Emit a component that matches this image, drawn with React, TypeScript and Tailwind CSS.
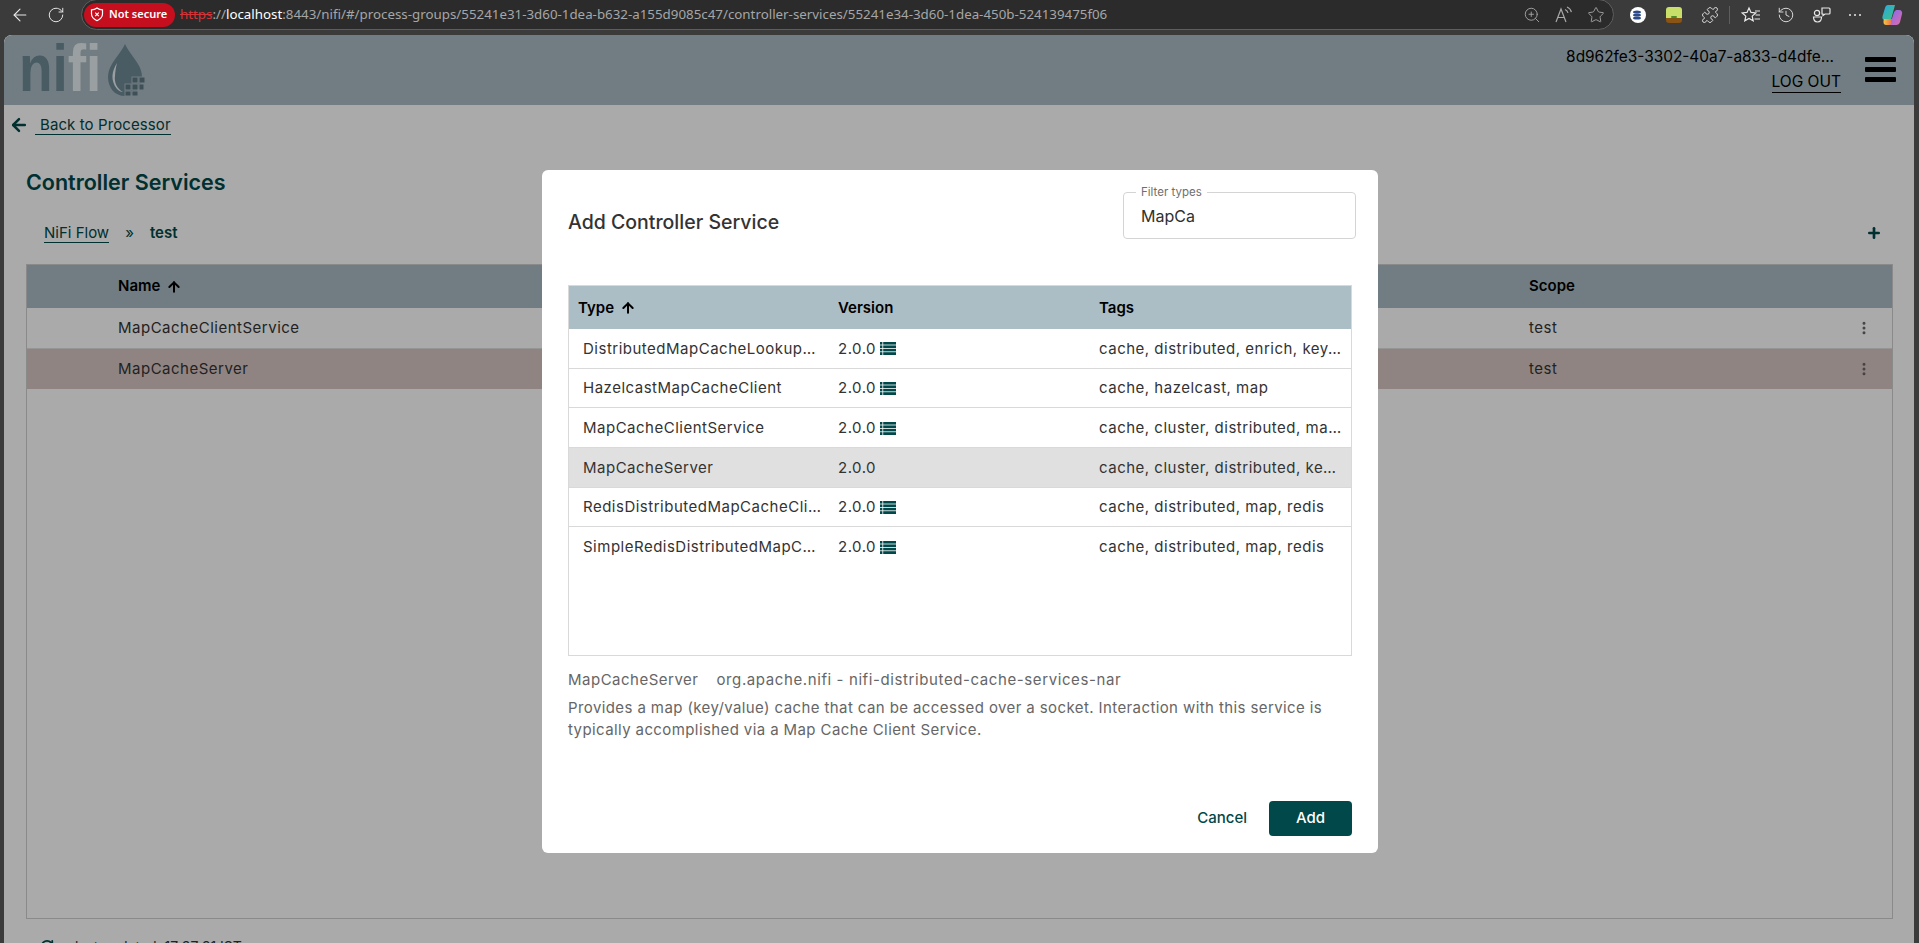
import { ArrowLeft, ArrowUp, EllipsisVertical, History, Plus, Puzzle, RotateCw, Star, ZoomIn } from "lucide-react";

interface TypeRow {
  type: string;
  tags: string;
  restricted: boolean;
  selected?: boolean;
}

const typeRows: TypeRow[] = [
  { type: "DistributedMapCacheLookupService", tags: "cache, distributed, enrich, key, lookup, map, value", restricted: true },
  { type: "HazelcastMapCacheClient", tags: "cache, hazelcast, map", restricted: true },
  { type: "MapCacheClientService", tags: "cache, cluster, distributed, map, state", restricted: true },
  { type: "MapCacheServer", tags: "cache, cluster, distributed, key/value, map, server", restricted: false, selected: true },
  { type: "RedisDistributedMapCacheClientService", tags: "cache, distributed, map, redis", restricted: true },
  { type: "SimpleRedisDistributedMapCacheClientService", tags: "cache, distributed, map, redis", restricted: true },
];

const ListIcon = () => (
  <svg width="16" height="13" viewBox="0 0 16 13" className="shrink-0" fill="#004849">
    <rect x="0" y="0" width="2.4" height="2.6" />
    <rect x="3.2" y="0" width="12.8" height="2.6" />
    <rect x="0" y="3.4" width="2.4" height="2.6" />
    <rect x="3.2" y="3.4" width="12.8" height="2.6" />
    <rect x="0" y="6.8" width="2.4" height="2.6" />
    <rect x="3.2" y="6.8" width="12.8" height="2.6" />
    <rect x="0" y="10.2" width="2.4" height="2.8" />
    <rect x="3.2" y="10.2" width="12.8" height="2.8" />
  </svg>
);

const BrowserBar = () => (
  <div className="h-[35px] shrink-0 flex items-start bg-[#3b3b3b] text-[#e8e8e8]">
    <div className="w-[40px] h-[30px] flex items-center justify-center">
      <ArrowLeft size={20} strokeWidth={1.3} />
    </div>
    <div className="w-[32px] h-[30px] flex items-center justify-center">
      <RotateCw size={18} strokeWidth={1.3} />
    </div>
    <div className="ml-[9px] -mt-px w-[1533px] h-[31px] rounded-full border border-[#5e5e5e] bg-[#2b2b2b] flex items-center pl-[2px] pr-[8px] overflow-hidden">
      <div className="h-[24px] w-[91px] rounded-full bg-[#c50f1f] flex items-center pl-[6px] gap-[5px] text-white text-[11px] font-semibold font-['Noto_Sans',sans-serif] shrink-0">
        <svg width="14" height="15" viewBox="0 0 14 15" fill="none" stroke="white" strokeWidth="1.2">
          <path d="M7 1c1.6 1.2 3.4 1.8 5.5 1.9v4.2c0 3-2.2 5.2-5.5 6.6-3.3-1.4-5.5-3.6-5.5-6.6V2.9C3.6 2.8 5.4 2.2 7 1z" />
          <path d="M5.2 5.6l3.6 3.6M8.8 5.6L5.2 9.2" />
        </svg>
        <span>Not secure</span>
      </div>
      <div className="ml-[5px] text-[13.33px] whitespace-nowrap text-[#a6a6a6] font-['Noto_Sans',sans-serif]">
        <span className="text-[#d13438] line-through">https</span>
        <span>://</span>
        <span className="text-white">localhost</span>
        <span>:8443/nifi/#/process-groups/55241e31-3d60-1dea-b632-a155d9085c47/controller-services/55241e34-3d60-1dea-450b-524139475f06</span>
      </div>
      <div className="ml-auto flex items-center gap-[13px] text-[#a8a8a8]">
        <ZoomIn size={18} strokeWidth={1.2} />
        <svg width="20" height="18" viewBox="0 0 20 18" fill="none" stroke="currentColor" strokeWidth="1.2">
          <path d="M2 16L7 3l5 13M3.8 11.5h6.4" />
          <path d="M11 3.5c1.6.6 2.6 1.8 3 3.4M13 1c2.4.9 3.9 2.8 4.4 5.2" />
        </svg>
        <Star size={18} strokeWidth={1.2} />
      </div>
    </div>
    <div className="ml-[16px] h-[30px] flex items-center">
      <div className="w-[16px] h-[16px] rounded-full bg-white flex items-center justify-center shrink-0">
        <svg width="12" height="12" viewBox="0 0 12 12" fill="#2d4a8a">
          <ellipse cx="5" cy="3" rx="4" ry="1.6" />
          <ellipse cx="5" cy="6" rx="4" ry="1.6" />
          <ellipse cx="5" cy="9" rx="4" ry="1.6" />
        </svg>
      </div>
      <div className="ml-[20px] w-[16px] h-[16px] rounded-[3px] overflow-hidden flex flex-col shrink-0">
        <div className="h-[11px] bg-[#c8e06a] flex items-end justify-center">
          <span className="w-[6px] h-[2px] bg-[#4d8a2a] rounded-full" />
        </div>
        <div className="h-[5px] bg-[#8a5414]" />
      </div>
      <Puzzle size={18} strokeWidth={1.2} className="ml-[19px]" />
      <div className="ml-[10px] w-px h-[18px] bg-[#5e5e5e]" />
      <svg width="20" height="18" viewBox="0 0 20 18" fill="none" stroke="currentColor" strokeWidth="1.2" className="ml-[11px]">
        <path d="M8 2l2 4.4 4.8.5-3.6 3.2 1 4.7L8 12.4l-4.2 2.4 1-4.7L1.200 6.900l4.800-.5z" />
        <path d="M14 5h5M14.500 9h4.500M13.500 13h5.500" />
      </svg>
      <History size={18} strokeWidth={1.2} className="ml-[16px]" />
      <svg width="20" height="18" viewBox="0 0 20 18" fill="none" stroke="currentColor" strokeWidth="1.2" className="ml-[17px]">
        <circle cx="5" cy="7" r="2.600" />
        <path d="M1.500 11h8c0 3-1.600 5-4 5s-4-2-4-5z" />
        <path d="M10 2h7a1 1 0 011 1v4a1 1 0 01-1 1h-4l-2 1.500V8h-1z" />
      </svg>
      <span className="ml-[17px] flex gap-[3px]">
        <span className="w-[2px] h-[2px] bg-[#e8e8e8] rounded-full" />
        <span className="w-[2px] h-[2px] bg-[#e8e8e8] rounded-full" />
        <span className="w-[2px] h-[2px] bg-[#e8e8e8] rounded-full" />
      </span>
      <svg width="22" height="22" viewBox="0 0 22 22" className="ml-[20px]">
        <defs>
          <linearGradient id="copA" x1="0" y1="0" x2="1" y2="1">
            <stop offset="0" stopColor="#2aa7e8" />
            <stop offset="1" stopColor="#3fc47a" />
          </linearGradient>
          <linearGradient id="copB" x1="0" y1="0" x2="1" y2="1">
            <stop offset="0" stopColor="#7a6df0" />
            <stop offset="1" stopColor="#e86aa8" />
          </linearGradient>
          <linearGradient id="copC" x1="0" y1="0" x2="1" y2="0">
            <stop offset="0" stopColor="#f5c542" />
            <stop offset="1" stopColor="#ee6a4c" />
          </linearGradient>
        </defs>
        <path d="M7 1h7l-4 15H4C1.500 16 1 14 1.600 12L4 4c.5-2 1.500-3 3-3z" fill="url(#copA)" />
        <path d="M15 6h3c2.500 0 3.500 2 3 4l-2 8c-.5 2-2 3-4 3H9l4-13z" fill="url(#copB)" />
        <path d="M3 15h8l-1 5c-.3.8-1 1-2 1H5c-2.500 0-3-3-2-6z" fill="url(#copC)" />
      </svg>
    </div>
  </div>
);

const NifiLogo = () => (
  <div className="flex items-start h-[70px]">
    <div className="w-[89px] h-[70px]">
      <span className="block origin-left scale-x-[0.82] font-['Liberation_Sans',sans-serif] font-bold text-[67px] leading-[70px] -mt-[2px] whitespace-nowrap">
        <span className="text-[#6f8a95]">ni</span>
        <span className="text-[#e8f0f4]">fi</span>
      </span>
    </div>
    <svg width="38" height="53" viewBox="0 0 38 53" className="mt-[9px]">
      <path d="M17 0c3 7 9 13 13 20 3 5 4 9 4 13 0 10-7 19-17 19S0 44 0 33c0-4 1-8 4-13C8 13 14 7 17 0z" fill="#6f8a95" />
      <path d="M9 19C4 27 2 36 9 45c2 2 4 3 6 3-6-3-9-10-8-16 .3-5 1-9 2-13z" fill="#e8f0f4" />
      <g fill="#5d7782" stroke="#aabcc4" strokeWidth="1">
        <rect x="24" y="33" width="6" height="6" />
        <rect x="31" y="33" width="6" height="6" />
        <rect x="17" y="40" width="6" height="6" />
        <rect x="24" y="40" width="6" height="6" />
        <rect x="31" y="40" width="5" height="6" />
        <rect x="17" y="47" width="6" height="5" />
        <rect x="24" y="47" width="6" height="5" />
      </g>
    </svg>
  </div>
);

const AddDialog = () => (
  <div className="w-[836px] h-[683px] bg-white rounded-[6px] flex flex-col px-[26px] font-['Inter',sans-serif]">
    <div className="flex justify-between items-start pt-[22px] -mr-[4px]">
      <h2 className="text-[19.5px] font-medium text-[#333333] mt-[15px] leading-[30px]">Add Controller Service</h2>
      <div className="relative w-[233px] h-[47px] border border-[#d4d4d4] rounded-[4px] flex items-center pl-[17px] text-[16px] text-[#303030]">
        <span className="absolute -top-[8px] left-[12px] bg-white px-[5px] text-[11.5px] leading-[14px] text-[#6f6f6f]">Filter types</span>
        MapCa
      </div>
    </div>
    <div className="mt-[46px] w-[784px] h-[371px] border border-[#d9d9d9]">
      <div className="h-[43px] pt-px bg-[#abbdc5] flex items-center text-[15px] font-semibold text-black">
        <div className="w-[269px] pl-[9px] flex items-center gap-[6px]">
          Type <ArrowUp size={16} strokeWidth={3} />
        </div>
        <div className="w-[261px]">Version</div>
        <div>Tags</div>
      </div>
      {typeRows.map((row, i) => (
        <div
          key={row.type}
          className={`h-[39.67px] pt-px flex items-center text-[15px] tracking-[0.5px] text-[#333333] ${row.selected ? "bg-[#e0e0e0]" : ""} ${i < typeRows.length - 1 ? "border-b border-[#d9d9d9]" : ""}`}
        >
          <div className="w-[269px] pl-[14px] pr-[14px] truncate">{row.type}</div>
          <div className="w-[261px] flex items-center gap-[4px]">
            2.0.0
            {row.restricted && <ListIcon />}
          </div>
          <div className="flex-1 min-w-0 pr-[8px] truncate">{row.tags}</div>
        </div>
      ))}
    </div>
    <div className="mt-[13px] text-[15px] leading-[22px] text-[#666666]">
      <div className="flex gap-[18px] tracking-[0.5px]">
        <span>MapCacheServer</span>
        <span className="tracking-[0.6px]">org.apache.nifi - nifi-distributed-cache-services-nar</span>
      </div>
      <p className="mt-[6px] tracking-[0.4px]">
        Provides a map (key/value) cache that can be accessed over a socket. Interaction with this service is typically accomplished via a Map Cache Client Service.
      </p>
    </div>
    <div className="mt-auto mb-[17px] flex justify-end items-center text-[15px] font-medium">
      <button className="text-[#004849] mr-[22px]">Cancel</button>
      <button className="w-[83px] h-[35px] bg-[#004849] text-white rounded-[4px]">Add</button>
    </div>
  </div>
);

const App = () => {
  return (
    <div className="h-screen overflow-hidden flex flex-col bg-[#3b3b3b]">
      <BrowserBar />
      <div className="flex-1 min-h-0 pl-[4px] pr-[5px]">
        <div className="relative h-full bg-white rounded-t-[8px] overflow-hidden font-['Inter',sans-serif] text-[15px]">
          <header className="h-[70px] bg-[#aabcc4] flex justify-between pl-[15px] pr-[18px]">
            <NifiLogo />
            <div className="flex">
              <div className="flex flex-col items-end pt-[12px] text-black">
                <span className="text-[15.4px] leading-[20px] mr-[7px]">8d962fe3-3302-40a7-a833-d4dfe...</span>
                <a className="mt-[5px] text-[15.5px] leading-[20px] border-b border-black">LOG OUT</a>
              </div>
              <div className="ml-[24px] pt-[22px] flex flex-col gap-[5px] w-[31px]">
                <span className="h-[5px] bg-black rounded-[1px]" />
                <span className="h-[5px] bg-black rounded-[1px]" />
                <span className="h-[5px] bg-black rounded-[1px]" />
              </div>
            </div>
          </header>

          <div className="flex items-center pl-[5px] mt-[10px] h-[20px] text-[#004849]">
            <ArrowLeft size={20} strokeWidth={3} />
            <a className="ml-[6px] pl-[5px] border-b border-[#004849] leading-[19px] tracking-[0.1px]">Back to Processor</a>
          </div>

          <h1 className="ml-[22px] mt-[33px] text-[21.5px] leading-[28px] font-semibold text-[#004849]">Controller Services</h1>

          <div className="flex items-center justify-between mt-[25px] ml-[40px] mr-[32px] h-[24px]">
            <div className="flex items-center text-[#004849]">
              <a className="border-b border-[#004849] leading-[19px]">NiFi Flow</a>
              <span className="mx-[16px]">»</span>
              <span className="font-semibold">test</span>
            </div>
            <Plus size={16} strokeWidth={4} className="text-[#004849]" />
          </div>

          <div className="mt-[19px] ml-[22px] mr-[21px] h-[655px] border border-[#d0d0d0]">
            <div className="h-[43px] bg-[#aabcc4] flex items-center font-semibold text-black">
              <div className="pl-[91px] w-[1502px] flex items-center gap-[6px]">
                Name <ArrowUp size={16} strokeWidth={3} />
              </div>
              <div>Scope</div>
            </div>
            <div className="h-[41px] flex items-center border-b border-[#e0e0e0] text-[#333333] tracking-[0.5px]">
              <div className="pl-[91px] w-[1502px]">MapCacheClientService</div>
              <div className="flex-1">test</div>
              <EllipsisVertical size={16} strokeWidth={2.5} className="mr-[20px] text-[#666666]" />
            </div>
            <div className="h-[40px] flex items-center bg-[#d9c7c4] text-[#333333] tracking-[0.5px]">
              <div className="pl-[91px] w-[1502px]">MapCacheServer</div>
              <div className="flex-1">test</div>
              <EllipsisVertical size={16} strokeWidth={2.5} className="mr-[20px] text-[#666666]" />
            </div>
          </div>

          <div className="flex items-center mt-[17px] ml-[36px] h-[20px] text-[14px] text-[#333333]">
            <RotateCw size={14} strokeWidth={3} className="text-[#004849]" />
            <span className="ml-[21px]">last updated: 17:37:21 IST</span>
          </div>

          {/* dialog backdrop */}
          <div className="absolute inset-0 bg-black/[0.335] flex items-start pl-[538px] pt-[135px]">
            <AddDialog />
          </div>
        </div>
      </div>
    </div>
  );
};

export default App;
